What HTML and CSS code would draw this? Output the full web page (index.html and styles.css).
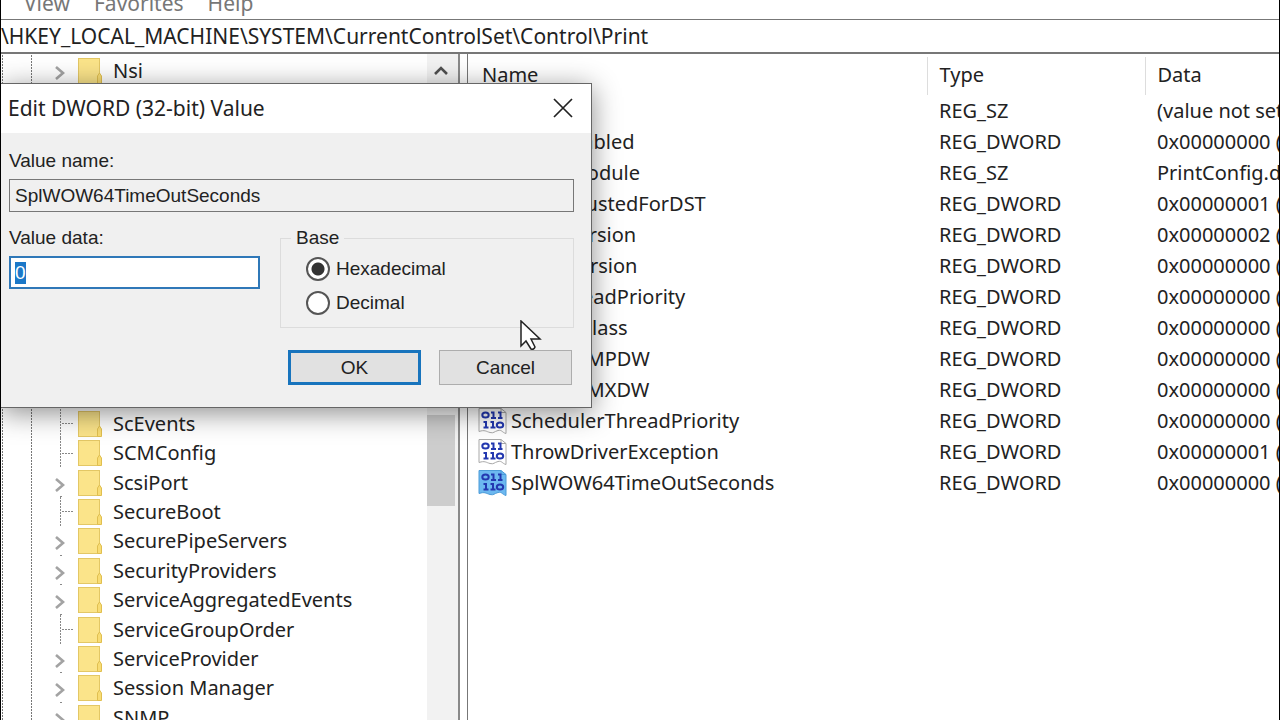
FILE: index.html
```html
<!DOCTYPE html>
<html lang="en">
<head>
  <meta charset="UTF-8" />
  <meta name="viewport" content="width=device-width, initial-scale=1" />
  <title>Registry Editor</title>
  <link rel="stylesheet" href="styles.css">
</head>
<body>

<!-- Shared icons -->
<svg class="sprites" aria-hidden="true">
  <symbol id="folder" viewBox="0 0 24 26">
    <rect x="0.5" y="0.5" width="21" height="25" fill="#fbe48a" stroke="#e3c765" />
    <path d="M19.5 25.5V18l2-3 2 3v7.5z" fill="#f8dc74" stroke="#e0bf50" />
  </symbol>
  <symbol id="chevron" viewBox="0 0 12 16">
    <path d="M2 2l7 6-7 6" fill="none" stroke="#a3a3a3" stroke-width="2.6" />
  </symbol>
  <symbol id="binary" viewBox="0 0 29 28">
    <path class="sheet" d="M1 1.5h22l5 4v21c-4-1-4-4-8-3s-4 3-8 2-5-3-11-1z" />
    <path class="fold" d="M23 1.5v4h5" />
    <g class="bits">
      <ellipse cx="7.5" cy="8" rx="3.2" ry="2.5" />
      <path d="M13 5.5h2.500v5.500M20 5.500h2.500v5.500M13 11h5M20 11h4.500" />
      <path d="M5.500 15h2.500v5.500M12.500 15h2.500v5.500M5.500 20.500h5M12.500 20.500h5" />
      <ellipse cx="22" cy="18" rx="3.2" ry="2.5" />
    </g>
  </symbol>
</svg>

<nav class="menubar">
  <button type="button">View</button>
  <button type="button">Favorites</button>
  <button type="button">Help</button>
</nav>

<input class="address" type="text" aria-label="Address" value="\HKEY_LOCAL_MACHINE\SYSTEM\CurrentControlSet\Control\Print" />

<main>
  <section class="tree-pane">
    <ul class="tree" id="tree"></ul>
    <div class="scrollbar">
      <button type="button" class="scroll-up" aria-label="Scroll up">
        <svg width="16" height="12" viewBox="0 0 16 12"><path d="M2 10l6-6 6 6" fill="none" stroke="#505050" stroke-width="2.6" /></svg>
      </button>
      <div class="thumb"></div>
    </div>
  </section>

  <section class="value-pane">
    <table>
      <colgroup><col class="col-name"><col class="col-type"><col></colgroup>
      <thead>
        <tr><th>Name</th><th>Type</th><th>Data</th></tr>
      </thead>
      <tbody id="values"></tbody>
    </table>
  </section>
</main>

<form class="dialog" role="dialog" aria-labelledby="dialog-title">
  <div class="titlebar">
    <h1 id="dialog-title">Edit DWORD (32-bit) Value</h1>
    <button type="button" class="close" aria-label="Close">
      <svg width="20" height="20" viewBox="0 0 20 20"><path d="M1 1l18 18M19 1L1 19" fill="none" stroke="#222" stroke-width="1.7" /></svg>
    </button>
  </div>
  <div class="dialog-body">
    <label for="value-name">Value name:</label>
    <input id="value-name" type="text" value="SplWOW64TimeOutSeconds" readonly />
    <div class="columns">
      <div class="data">
        <label for="value-data">Value data:</label>
        <input id="value-data" type="text" value="0" />
      </div>
      <fieldset>
        <legend>Base</legend>
        <label><input type="radio" name="base" checked />Hexadecimal</label>
        <label><input type="radio" name="base" />Decimal</label>
      </fieldset>
    </div>
    <div class="actions">
      <button type="button" class="default">OK</button>
      <button type="button">Cancel</button>
    </div>
  </div>
  <svg class="pointer" width="22" height="32" viewBox="0 0 22 32">
    <path d="M1 1v25l5-5 5 8q3 1 4-2l-4-8h9z" fill="#fff" stroke="#222" stroke-width="1.5" />
  </svg>
</form>

<script>
  // [name, has subkeys]
  const keys = [
    ["Nsi", true],
    ...Array(11).fill(["", false]),
    ["ScEvents", false],
    ["SCMConfig", false],
    ["ScsiPort", true],
    ["SecureBoot", false],
    ["SecurePipeServers", true],
    ["SecurityProviders", true],
    ["ServiceAggregatedEvents", true],
    ["ServiceGroupOrder", false],
    ["ServiceProvider", true],
    ["Session Manager", true],
    ["SNMP", true]
  ];

  const values = [
    ["(Default)", "REG_SZ", "(value not set)"],
    ["BeepEnabled", "REG_DWORD", "0x00000000 (0)"],
    ["DriverModule", "REG_SZ", "PrintConfig.dll"],
    ["DateAdjustedForDST", "REG_DWORD", "0x00000001 (1)"],
    ["MajorVersion", "REG_DWORD", "0x00000002 (2)"],
    ["MinorVersion", "REG_DWORD", "0x00000000 (0)"],
    ["PortThreadPriority", "REG_DWORD", "0x00000000 (0)"],
    ["PriorityClass", "REG_DWORD", "0x00000000 (0)"],
    ["RemoveMPDW", "REG_DWORD", "0x00000000 (0)"],
    ["RemoveMXDW", "REG_DWORD", "0x00000000 (0)"],
    ["SchedulerThreadPriority", "REG_DWORD", "0x00000000 (0)"],
    ["ThrowDriverException", "REG_DWORD", "0x00000001 (1)"],
    ["SplWOW64TimeOutSeconds", "REG_DWORD", "0x00000000 (0)"]
  ];

  document.getElementById('tree').innerHTML = keys.map(([name, sub]) => `
    <li>
      <span class="branch ${sub ? 'closed' : 'leaf'}">${sub ? '<svg width="12" height="16"><use href="#chevron" /></svg>' : ''}</span>
      <svg width="24" height="26"><use href="#folder" /></svg>
      <span class="key">${name}</span>
    </li>`).join('');

  document.getElementById('values').innerHTML = values.map(([name, type, data], i) => `
    <tr class="${i === values.length - 1 ? 'selected' : ''}">
      <td><div class="name"><svg width="29" height="28"><use href="#binary" /></svg>${name}</div></td>
      <td>${type}</td>
      <td>${data}</td>
    </tr>`).join('');

  const dataInput = document.getElementById('value-data');
  dataInput.focus();
  dataInput.select();
</script>

</body>
</html>
```
FILE: styles.css
```css
* { box-sizing: border-box; }
body {
  margin: 0; height: 100vh; overflow: hidden; position: relative;
  display: flex; flex-direction: column;
  border: solid #000; border-width: 0 1px;
  background: #fff; color: #222;
  font: 20px/28px 'Noto Sans', 'Open Sans', sans-serif;
}
button, input { font: inherit; color: inherit; }
svg { display: block; flex: none; }
.sprites { position: absolute; width: 0; height: 0; }

.menubar {
  flex: none; height: 19px; padding: 0 0 2px 23px;
  display: flex; align-items: flex-end; gap: 24px; overflow: hidden;
  font-size: 21px;
}
.menubar button {
  border: 0; padding: 0; background: none; color: #777;
}
.address {
  flex: none; width: 100%; height: 35px; padding: 0; outline: none;
  border: solid #777; border-width: 1px 0 2px; background: #fff;
  font-size: 21px;
}

main { flex: 1; display: flex; min-height: 0; }

/* Key tree */
.tree-pane {
  flex: none; width: 459px; display: flex;
  border-right: 2px solid #8a8a8a;
}
.tree {
  flex: 1; margin: 0; padding: 2px 0 0; list-style: none; overflow: hidden;
  background:
    repeating-linear-gradient(#fff 0 1px, transparent 1px 3px) 1px 0 / 1px 100% no-repeat,
    repeating-linear-gradient(#fff 0 1px, transparent 1px 3px) 30px 0 / 1px 100% no-repeat,
    linear-gradient(#777, #777) 1px 0 / 1px 100% no-repeat,
    linear-gradient(#777, #777) 30px 0 / 1px 100% no-repeat;
}
.tree li {
  display: flex; align-items: center; height: 29px; padding-left: 53px;
  white-space: nowrap;
}
.tree li:nth-child(5n+2), .tree li:nth-child(5n+4) { height: 30px; }
.branch {
  align-self: stretch; width: 24px; display: flex; align-items: center;
}
.branch.leaf {
  background:
    repeating-linear-gradient(#888 0 2px, transparent 2px 3px) 6px 0 / 1px 100% no-repeat,
    repeating-linear-gradient(90deg, #888 0 2px, transparent 2px 3px) 8px 50% / 11px 1px no-repeat;
}
.branch.closed {
  padding-top: 4px;
  background: linear-gradient(#888, #888) 6px 100% / 2px 1px no-repeat;
}
.key { margin-left: 11px; }

.scrollbar { flex: none; width: 31px; background: #f2f2f2; }
.scroll-up {
  display: flex; align-items: center; justify-content: center;
  width: 28px; height: 32px; border: 0; padding: 0; background: none;
}
.thumb { width: 28px; height: 91px; margin-top: 329px; background: #cdcdcd; }

/* Values list */
.value-pane {
  flex: 1; min-width: 0; margin-left: 7px; padding-top: 3px; overflow: hidden;
  border-left: 1px solid #777;
}
table { width: 100%; table-layout: fixed; border-collapse: collapse; }
.col-name { width: 459px; }
.col-type { width: 218px; }
th {
  height: 38px; padding: 0 0 2px 12px; text-align: left; font-weight: 400;
  border-right: 1px solid #ddd;
}
th:first-child { padding-left: 14px; }
th:last-child { border-right: 0; }
td { height: 31px; padding: 0 0 0 12px; white-space: nowrap; overflow: hidden; }
td:first-child { padding-left: 10px; }
.name { display: flex; align-items: center; gap: 4px; }
.name svg { fill: #fff; color: #a8a8a8; }
.fold { fill: none; stroke: currentColor; }
.sheet { stroke: currentColor; }
.bits { fill: none; stroke: #2338b0; stroke-width: 2; }
.selected .name svg { fill: #6cb8f0; color: #4b9bd8; }

/* Edit dialog */
.dialog {
  position: absolute; left: 0; top: 83px; width: 591px;
  border: 1px solid #666; border-left: 0; background: #f0f0f0;
  box-shadow: 0 5px 26px rgba(0,0,0,0.45);
}
.titlebar {
  display: flex; align-items: center; justify-content: space-between;
  height: 49px; padding: 0 18px 2px 7px; background: #fff;
}
h1 { margin: 0; font-size: 21px; font-weight: 400; }
.close { border: 0; padding: 0; background: none; }
.dialog-body {
  padding: 16px 17px 22px 8px;
  font: 19px/24px 'Liberation Sans', sans-serif;
}
.dialog-body label { display: block; }
.dialog-body input[type="text"] {
  display: block; width: 100%; height: 33px; margin-top: 6px; padding: 0 5px;
  border: 1px solid #777; border-radius: 0; outline: none; background: #f0f0f0;
}
.dialog-body #value-data { border: 2px solid #2f78b8; background: #fff; padding: 0 4px; }
#value-data::selection { background: #1b78c8; color: #fff; }
.columns {
  display: grid; grid-template-columns: 251px 1fr; gap: 20px; margin-top: 14px;
}
fieldset {
  height: 102px; margin: 0; padding: 2px 0 0 25px; border: 1px solid #dcdcdc;
}
legend { margin-left: -15px; padding: 0 5px; }
.dialog-body fieldset label { display: flex; align-items: center; height: 34px; }
input[type="radio"] {
  appearance: none; width: 24px; height: 24px; margin: 0 6px 0 0;
  border: 2px solid #555; border-radius: 50%; background: #fff;
}
input[type="radio"]:checked { background: radial-gradient(circle, #333 0 6px, #fff 7px); }
.actions {
  display: flex; justify-content: flex-end; gap: 18px; padding-right: 2px; margin-top: 22px;
}
.actions button {
  width: 133px; height: 35px; padding: 0; border: 1px solid #adadad; background: #e1e1e1;
}
.actions .default { border: 3px solid #1874bd; }
.pointer { position: absolute; left: 519px; top: 236px; }
```
